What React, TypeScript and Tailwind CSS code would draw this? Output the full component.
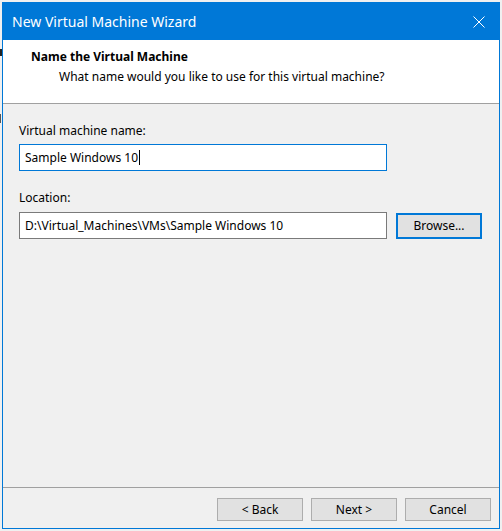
import React from "react";

const font = { fontFamily: '"Noto Sans", "Segoe UI", sans-serif' };

function WinButton({ children }: { children: React.ReactNode }) {
  return (
    <div className="w-[86px] h-[23px] border border-[#adadad] bg-[#e1e1e1] flex items-center justify-center text-[12px] text-black leading-none">
      {children}
    </div>
  );
}

export default function App() {
  return (
    <div className="relative w-[502px] h-[531px] bg-[#f0f0f0] overflow-hidden" style={font}>
      {/* bits of a window behind, peeking at the left edge */}
      <div className="absolute left-0 top-[49px] w-[2px] h-[7px] bg-[#222]" />
      <div className="absolute left-0 top-[114px] w-[1px] h-[9px] bg-[#555]" />

      <div className="ml-[2px] mt-[2px] w-[498px] h-[527px] border border-[#0078d7] flex flex-col bg-[#f0f0f0]">
        {/* title bar */}
        <div className="h-[37px] shrink-0 bg-[#0078d7] flex items-center justify-between pl-[9px] pr-[14px]">
          <span className="text-white text-[14px] leading-none">New Virtual Machine Wizard</span>
          <svg width="12" height="12" viewBox="0 0 12 12">
            <path d="M0.5 0.5 L11.5 11.5 M11.5 0.5 L0.5 11.5" stroke="white" strokeWidth="1" />
          </svg>
        </div>

        {/* header */}
        <div className="h-[64px] shrink-0 bg-white border-b border-[#a0a0a0] pl-[28px] pt-[9px]">
          <div className="text-[12px] font-bold leading-[16px] text-black">Name the Virtual Machine</div>
          <div className="text-[12px] leading-[16px] text-black pl-[28px] pt-[4px]">
            What name would you like to use for this virtual machine?
          </div>
        </div>

        {/* body */}
        <div className="flex-1 flex flex-col pl-[16px] pt-[19px]">
          <div className="text-[12px] leading-[16px] text-black">Virtual machine name:</div>
          <div className="mt-[5px] w-[368px] h-[27px] border border-[#0078d7] bg-white flex items-center pl-[5px] text-[12px] text-black">
            <span>Sample Windows 10</span>
            <span className="inline-block w-[1px] h-[15px] bg-black ml-[1px]" />
          </div>
          <div className="mt-[19px] text-[12px] leading-[16px] text-black">Location:</div>
          <div className="mt-[6px] flex items-start gap-[9px]">
            <div className="w-[368px] h-[27px] border border-[#7a7a7a] bg-white flex items-center pl-[5px] text-[12px] text-black">
              D:\Virtual_Machines\VMs\Sample Windows 10
            </div>
            <div className="mt-[1px] w-[86px] h-[26px] border-2 border-[#0078d7] bg-[#e1e1e1] flex items-center justify-center text-[12px] text-black">
              Browse...
            </div>
          </div>
        </div>

        {/* footer */}
        <div className="h-[41px] shrink-0 border-t border-[#a0a0a0] flex justify-end items-start gap-[8px] pt-[10px] pr-[8px]">
          <WinButton>&lt; Back</WinButton>
          <WinButton>Next &gt;</WinButton>
          <WinButton>Cancel</WinButton>
        </div>
      </div>
    </div>
  );
}
